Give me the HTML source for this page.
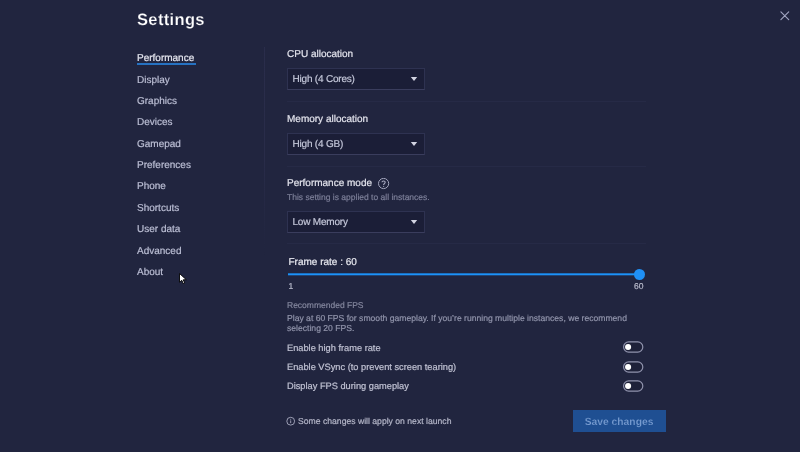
<!DOCTYPE html>
<html><head><meta charset="utf-8"><style>
html,body{margin:0;padding:0;}
body{width:800px;height:452px;overflow:hidden;background:#21253f;position:relative;font-family:"Liberation Sans",sans-serif;}
#w{position:absolute;left:0;top:0;width:800px;height:452px;will-change:transform;}
.t{position:absolute;white-space:nowrap;line-height:1;text-rendering:geometricPrecision;-webkit-text-stroke:0.2px currentColor;}
</style></head><body><div id="w">
<div class="t" style="left:137px;top:12.43px;font-size:16.5px;color:#ffffff;font-weight:700;letter-spacing:0.35px;-webkit-text-stroke:0.2px #21253f;">Settings</div>
<svg style="position:absolute;left:778.1px;top:8.8px" width="14" height="14" viewBox="0 0 14 14"><path d="M2.9 2.9 L10.7 10.7 M10.7 2.9 L2.9 10.7" stroke="#a0a3bf" stroke-width="1.15" stroke-linecap="round"/></svg>
<div class="t" style="left:137px;top:54.14px;font-size:10px;color:#e6e7f0;font-weight:400;letter-spacing:0px;">Performance</div>
<div class="t" style="left:137px;top:75.52px;font-size:10px;color:#bcbfd5;font-weight:400;letter-spacing:0px;">Display</div>
<div class="t" style="left:137px;top:96.89px;font-size:10px;color:#bcbfd5;font-weight:400;letter-spacing:0px;">Graphics</div>
<div class="t" style="left:137px;top:118.28px;font-size:10px;color:#bcbfd5;font-weight:400;letter-spacing:0px;">Devices</div>
<div class="t" style="left:137px;top:139.66px;font-size:10px;color:#bcbfd5;font-weight:400;letter-spacing:0px;">Gamepad</div>
<div class="t" style="left:137px;top:161.03px;font-size:10px;color:#bcbfd5;font-weight:400;letter-spacing:0px;">Preferences</div>
<div class="t" style="left:137px;top:182.41px;font-size:10px;color:#bcbfd5;font-weight:400;letter-spacing:0px;">Phone</div>
<div class="t" style="left:137px;top:203.79px;font-size:10px;color:#bcbfd5;font-weight:400;letter-spacing:0px;">Shortcuts</div>
<div class="t" style="left:137px;top:225.17px;font-size:10px;color:#bcbfd5;font-weight:400;letter-spacing:0px;">User data</div>
<div class="t" style="left:137px;top:246.55px;font-size:10px;color:#bcbfd5;font-weight:400;letter-spacing:0px;">Advanced</div>
<div class="t" style="left:137px;top:267.94px;font-size:10px;color:#bcbfd5;font-weight:400;letter-spacing:0px;">About</div>
<div style="position:absolute;left:137px;top:63px;width:59px;height:2px;background:#2672c2"></div>
<div style="position:absolute;left:264px;top:47px;width:1px;height:208px;background:linear-gradient(#2a2d4b,#292c49 55%,rgba(41,44,73,0))"></div>
<div class="t" style="left:287px;top:50.03px;font-size:10px;color:#e2e3ec;font-weight:400;letter-spacing:0px;">CPU allocation</div>
<div style="position:absolute;left:287px;top:68px;width:138px;height:22px;box-sizing:border-box;background:#1b1e37;border:1px solid #2e3251;border-bottom-color:#3a3d5d"></div>
<div class="t" style="left:292.5px;top:75.13px;font-size:10px;color:#c4c7d9;font-weight:400;letter-spacing:-0.2px;">High (4 Cores)</div>
<svg style="position:absolute;left:410px;top:76px" width="8" height="6" viewBox="0 0 8 6"><path d="M0.8 1 L7.2 1 L4 5 Z" fill="#d2d4e2"/></svg>
<div style="position:absolute;left:287px;top:101px;width:359px;height:1px;background:#262a46"></div>
<div class="t" style="left:287px;top:115.03px;font-size:10px;color:#e2e3ec;font-weight:400;letter-spacing:0px;">Memory allocation</div>
<div style="position:absolute;left:287px;top:133px;width:138px;height:22px;box-sizing:border-box;background:#1b1e37;border:1px solid #2e3251;border-bottom-color:#3a3d5d"></div>
<div class="t" style="left:292.5px;top:140.13px;font-size:10px;color:#c4c7d9;font-weight:400;letter-spacing:-0.2px;">High (4 GB)</div>
<svg style="position:absolute;left:410px;top:141px" width="8" height="6" viewBox="0 0 8 6"><path d="M0.8 1 L7.2 1 L4 5 Z" fill="#d2d4e2"/></svg>
<div style="position:absolute;left:287px;top:166px;width:359px;height:1px;background:#262a46"></div>
<div class="t" style="left:287px;top:179.44px;font-size:10px;color:#e2e3ec;font-weight:400;letter-spacing:0px;">Performance mode</div>
<svg style="position:absolute;left:377px;top:178px" width="13" height="13" viewBox="0 0 13 13"><circle cx="6.6" cy="5.5" r="5.1" fill="none" stroke="#a3a6bd" stroke-width="1"/><path d="M5 4.3 C5 2.5 8.2 2.5 8.2 4.3 C8.2 5.5 6.6 5.4 6.6 6.9" fill="none" stroke="#a3a6bd" stroke-width="1.15"/><circle cx="6.6" cy="8.3" r="0.6" fill="#a3a6bd"/></svg>
<div class="t" style="left:287px;top:193.00px;font-size:8.5px;color:#7c7f98;font-weight:400;letter-spacing:0px;">This setting is applied to all instances.</div>
<div style="position:absolute;left:287px;top:211px;width:138px;height:22px;box-sizing:border-box;background:#1b1e37;border:1px solid #2e3251;border-bottom-color:#3a3d5d"></div>
<div class="t" style="left:292.5px;top:218.13px;font-size:10px;color:#c4c7d9;font-weight:400;letter-spacing:-0.2px;">Low Memory</div>
<svg style="position:absolute;left:410px;top:219px" width="8" height="6" viewBox="0 0 8 6"><path d="M0.8 1 L7.2 1 L4 5 Z" fill="#d2d4e2"/></svg>
<div style="position:absolute;left:287px;top:243px;width:359px;height:1px;background:#262a46"></div>
<div class="t" style="left:288.5px;top:257.74px;font-size:10px;color:#e8e9f0;font-weight:400;letter-spacing:0px;">Frame rate : 60</div>
<svg style="position:absolute;left:0;top:0" width="800" height="452"><rect x="288" y="273.3" width="350" height="2" fill="#1c92f8"/></svg>
<div style="position:absolute;left:633.5px;top:268.8px;width:11px;height:11px;border-radius:50%;background:#1f90f5"></div>
<div class="t" style="left:288.5px;top:282.00px;font-size:8.5px;color:#b8bacb;font-weight:400;letter-spacing:0px;">1</div>
<div class="t" style="left:634px;top:282.00px;font-size:8.5px;color:#b8bacb;font-weight:400;letter-spacing:0px;">60</div>
<div class="t" style="left:287px;top:301.00px;font-size:8.5px;color:#82859c;font-weight:400;letter-spacing:0px;">Recommended FPS</div>
<div class="t" style="left:287px;top:313.52px;font-size:8.6px;color:#9093aa;font-weight:400;letter-spacing:0px;">Play at 60 FPS for smooth gameplay. If you’re running multiple instances, we recommend</div>
<div class="t" style="left:287px;top:323.52px;font-size:8.6px;color:#9093aa;font-weight:400;letter-spacing:0px;">selecting 20 FPS.</div>
<div class="t" style="left:287px;top:343.67px;font-size:9.25px;color:#c0c2d3;font-weight:400;letter-spacing:0px;">Enable high frame rate</div>
<svg style="position:absolute;left:618px;top:337.2px" width="30" height="20"><rect x="5.6" y="4.9" width="19.2" height="10.2" rx="5.1" fill="#1e2139" stroke="#9093ad" stroke-width="1.2"/><circle cx="10.1" cy="10" r="3.05" fill="#fff"/></svg>
<div class="t" style="left:287px;top:363.17px;font-size:9.25px;color:#c0c2d3;font-weight:400;letter-spacing:0px;">Enable VSync (to prevent screen tearing)</div>
<svg style="position:absolute;left:618px;top:356.7px" width="30" height="20"><rect x="5.6" y="4.9" width="19.2" height="10.2" rx="5.1" fill="#1e2139" stroke="#9093ad" stroke-width="1.2"/><circle cx="10.1" cy="10" r="3.05" fill="#fff"/></svg>
<div class="t" style="left:287px;top:382.37px;font-size:9.25px;color:#c0c2d3;font-weight:400;letter-spacing:0px;">Display FPS during gameplay</div>
<svg style="position:absolute;left:618px;top:376.0px" width="30" height="20"><rect x="5.6" y="4.9" width="19.2" height="10.2" rx="5.1" fill="#1e2139" stroke="#9093ad" stroke-width="1.2"/><circle cx="10.1" cy="10" r="3.05" fill="#fff"/></svg>
<svg style="position:absolute;left:285px;top:415px" width="12" height="12" viewBox="0 0 12 12"><circle cx="5.7" cy="6.2" r="3.9" fill="none" stroke="#a2a4ba" stroke-width="0.95"/><path d="M5.7 5.4 L5.7 8.1" stroke="#a2a4ba" stroke-width="0.95"/><circle cx="5.7" cy="4.3" r="0.5" fill="#a2a4ba"/></svg>
<div class="t" style="left:298px;top:417.48px;font-size:8.65px;color:#b3b5c7;font-weight:400;letter-spacing:0px;">Some changes will apply on next launch</div>
<div style="position:absolute;left:573px;top:410px;width:93px;height:22px;background:#1f4f92"></div>
<div class="t" style="left:584.7px;top:417.88px;font-size:10.3px;color:#789cd0;font-weight:700;letter-spacing:0px;-webkit-text-stroke:0.15px #1f4f92;">Save changes</div>
<svg style="position:absolute;left:177.5px;top:271.8px" width="12" height="14" viewBox="0 0 12 14"><path d="M1.5 1.5 L1.5 10.2 L3.8 8.3 L5.3 11.6 L6.7 11.0 L5.2 7.8 L8.3 7.7 Z" fill="#ffffff" stroke="#000000" stroke-width="0.9" stroke-linejoin="round"/></svg>
</div></body></html>
